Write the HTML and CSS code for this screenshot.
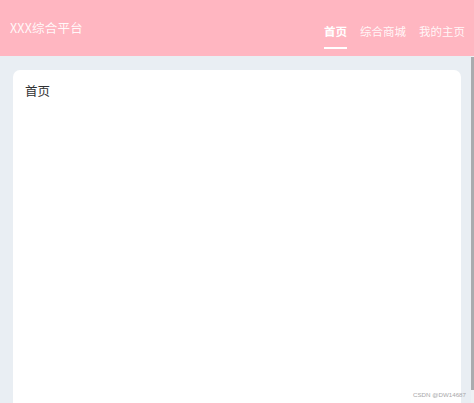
FILE: index.html
```html
<!DOCTYPE html>
<html lang="zh">
<head>
<meta charset="utf-8">
<title>XXX综合平台</title>
<link rel="stylesheet" href="styles.css">
</head>
<body>
<div class="page">
  <header class="header">
    <div class="brand">XXX综合平台</div>
    <nav class="nav">
      <a class="nav-item active">首页</a>
      <a class="nav-item">综合商城</a>
      <a class="nav-item">我的主页</a>
    </nav>
  </header>
  <div class="body-wrap">
    <main class="main">
      <section class="card">首页</section>
    </main>
    <div class="scrollbar"><div class="thumb"></div></div>
  </div>
  <div class="watermark">CSDN @DW14687</div>
</div>
</body>
</html>
```
FILE: styles.css
```css
html, body {
  margin: 0;
  padding: 0;
  height: 100%;
  overflow: hidden;
}
body {
  font-family: "Noto Sans CJK SC", "Noto Sans", sans-serif;
  background: #e9eef3;
}
.page {
  position: relative;
  display: flex;
  flex-direction: column;
  height: 403px;
}
.header {
  height: 56px;
  flex: 0 0 56px;
  background: #ffb6c1;
  display: flex;
  justify-content: space-between;
  align-items: flex-start;
  padding: 0 9px 0 10px;
  box-sizing: border-box;
}
.brand {
  color: rgba(255, 255, 255, 0.92);
  font-size: 12.5px;
  line-height: 14px;
  padding-top: 21px;
  letter-spacing: 0.2px;
}
.nav {
  display: flex;
  gap: 13px;
}
.nav-item {
  color: rgba(255, 255, 255, 0.9);
  font-size: 11.5px;
  line-height: 14px;
  padding-top: 24px;
  padding-bottom: 9px;
  border-bottom: 2px solid transparent;
  cursor: pointer;
}
.nav-item.active {
  color: #fff;
  font-weight: 700;
  border-bottom-color: #fff;
}
.body-wrap {
  flex: 1;
  display: flex;
  min-height: 0;
}
.main {
  flex: 1;
  display: flex;
  flex-direction: column;
  padding: 14px 10px 0 13px;
  min-height: 0;
}
.card {
  flex: 1;
  background: #fff;
  border-radius: 7px 7px 0 0;
  padding: 13px 12px;
  font-size: 12.5px;
  line-height: 16px;
  color: #303133;
}
.scrollbar {
  width: 3px;
  padding-top: 1px;
  background: #eef1f4;
}
.thumb {
  height: 333px;
  background: #a9abae;
}
.watermark {
  position: absolute;
  right: 8px;
  bottom: 4px;
  font-family: "Liberation Sans", Arial, sans-serif;
  font-size: 6.2px;
  line-height: 9px;
  color: #a8a8a8;
  letter-spacing: 0;
}
```
